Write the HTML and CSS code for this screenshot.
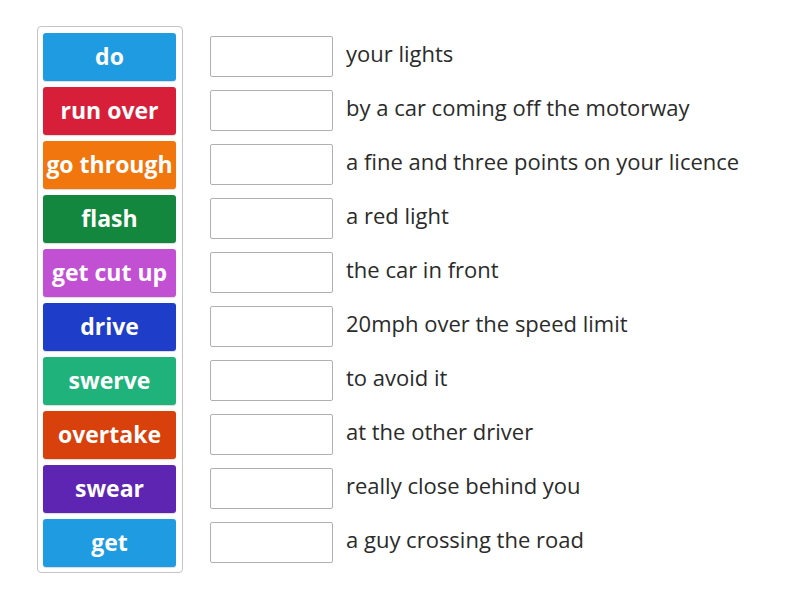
FILE: index.html
```html
<!DOCTYPE html>
<html>
<head>
<meta charset="utf-8">
<link rel="stylesheet" href="styles.css">
</head>
<body>
<div class="page">
  <div class="bank">
    <div class="tile c1">do</div>
    <div class="tile c2">run over</div>
    <div class="tile c3">go through</div>
    <div class="tile c4">flash</div>
    <div class="tile c5">get cut up</div>
    <div class="tile c6">drive</div>
    <div class="tile c7">swerve</div>
    <div class="tile c8">overtake</div>
    <div class="tile c9">swear</div>
    <div class="tile c1">get</div>
  </div>
  <div class="rows">
    <div class="row"><div class="slot"></div><span class="label">your lights</span></div>
    <div class="row"><div class="slot"></div><span class="label">by a car coming off the motorway</span></div>
    <div class="row"><div class="slot"></div><span class="label">a fine and three points on your licence</span></div>
    <div class="row"><div class="slot"></div><span class="label">a red light</span></div>
    <div class="row"><div class="slot"></div><span class="label">the car in front</span></div>
    <div class="row"><div class="slot"></div><span class="label">20mph over the speed limit</span></div>
    <div class="row"><div class="slot"></div><span class="label">to avoid it</span></div>
    <div class="row"><div class="slot"></div><span class="label">at the other driver</span></div>
    <div class="row"><div class="slot"></div><span class="label">really close behind you</span></div>
    <div class="row"><div class="slot"></div><span class="label">a guy crossing the road</span></div>
  </div>
</div>
</body>
</html>
```
FILE: styles.css
```css
html, body {
  margin: 0;
  padding: 0;
  background: #ffffff;
}
body {
  font-family: "Open Sans", "Liberation Sans", sans-serif;
}
.page {
  display: flex;
  align-items: flex-start;
  padding: 26px 0 0 37px;
  gap: 27px;
}
.bank {
  display: flex;
  flex-direction: column;
  gap: 6px;
  width: 133px;
  padding: 6px 6px 5px 5px;
  border: 1px solid #c4c4c4;
  border-radius: 4px;
}
.tile {
  height: 48px;
  padding-bottom: 3px;
  box-sizing: border-box;
  border-radius: 3px;
  color: #ffffff;
  font-weight: 700;
  font-size: 23px;
  display: flex;
  align-items: center;
  justify-content: center;
  white-space: nowrap;
  box-shadow: 0 1px 1px rgba(0,0,0,0.15);
}
.c1 { background: #1e9be1; }
.c2 { background: #d81f3a; }
.c3 { background: #f0760d; }
.c4 { background: #12873d; }
.c5 { background: #c250d2; }
.c6 { background: #1e3dc8; }
.c7 { background: #1fb27b; }
.c8 { background: #d8400c; }
.c9 { background: #5d25b1; }
.rows {
  display: flex;
  flex-direction: column;
  gap: 13px;
  padding-top: 10px;
}
.row {
  display: flex;
  align-items: center;
  gap: 13px;
  height: 41px;
}
.slot {
  width: 121px;
  height: 39px;
  border: 1px solid #b0b0b0;
  border-radius: 2px;
  background: #ffffff;
  flex: none;
}
.label {
  font-size: 22px;
  color: #2b2b2b;
  white-space: nowrap;
  margin-top: -7px;
}
```
